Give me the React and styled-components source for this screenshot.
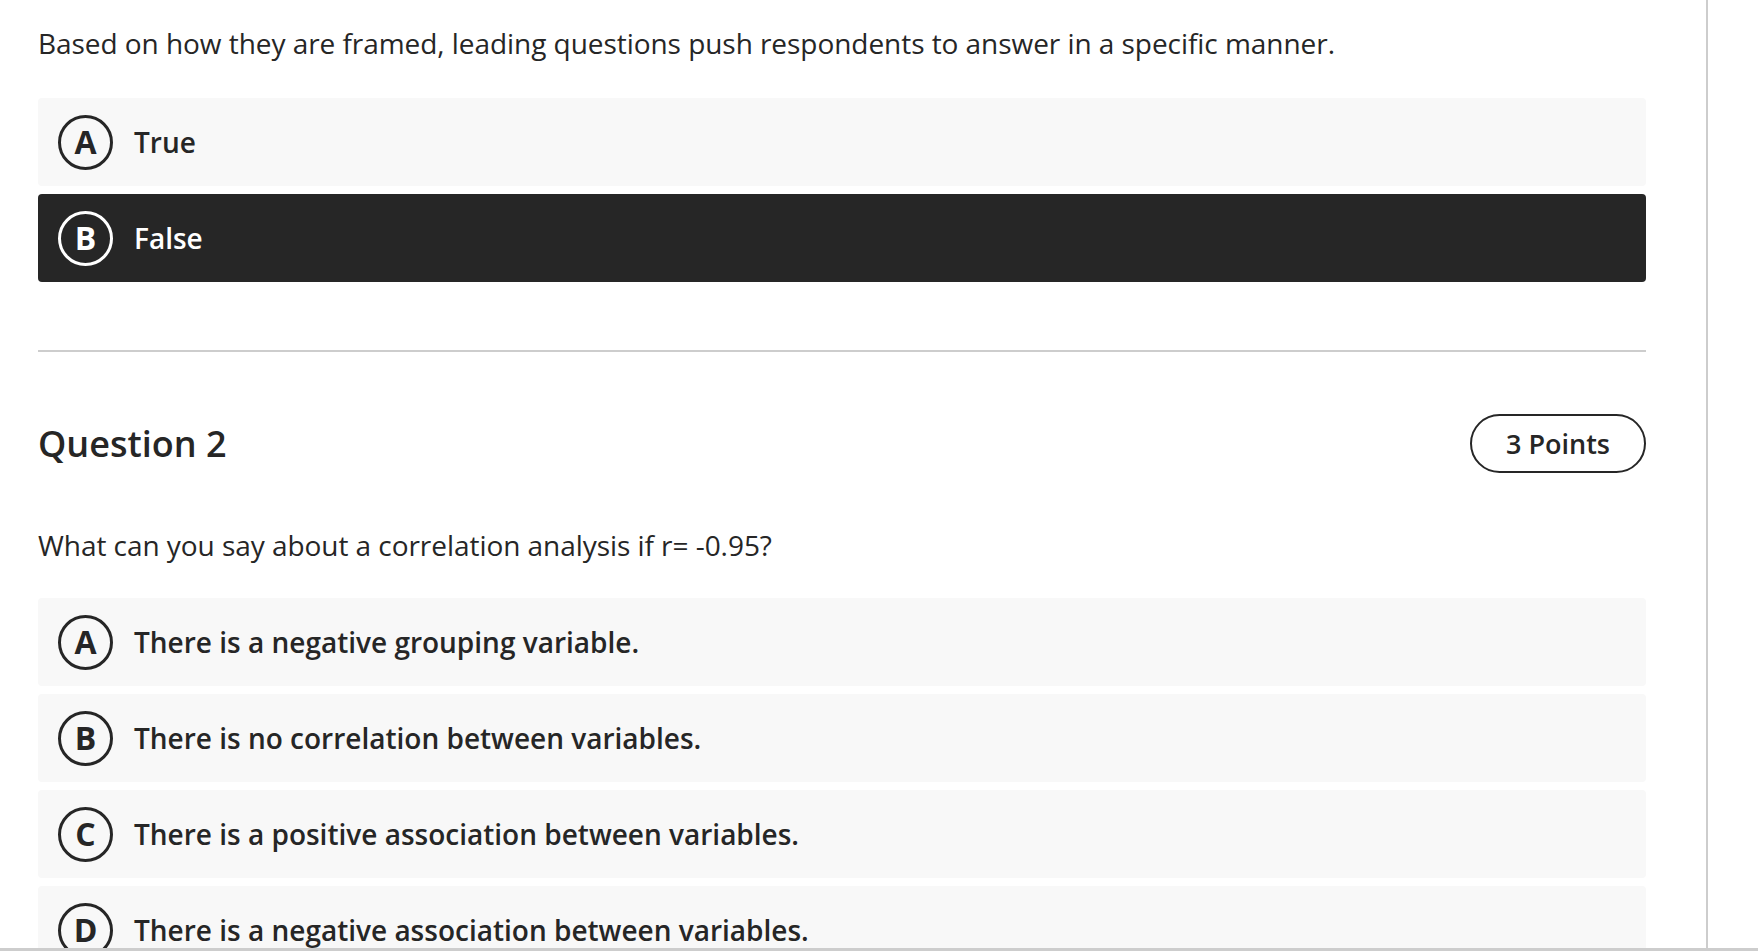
import styled, { createGlobalStyle } from 'styled-components'

const GlobalStyle = createGlobalStyle`
    html, body {
        margin: 0;
        padding: 0;
        background: #ffffff;
    }
    body {
        font-family: "Open Sans", "Noto Sans", "Liberation Sans", sans-serif;
        color: #262626;
    }
    * {
        box-sizing: border-box;
    }
`

const Frame = styled.div`
    display: flex;
    height: 951px;
    border-bottom: 3px solid #cdcdcd;
    overflow: hidden;
`

const Panel = styled.main`
    width: 1708px;
    flex-shrink: 0;
    height: 100%;
    overflow: hidden;
    border-right: 2px solid #cdcdcd;
    padding: 22px 60px 0 38px;
`

const Aside = styled.div`
    flex: 1;
`

const Prompt = styled.p`
    margin: ${p => p.$top || 0}px 0 0;
    font-size: 28px;
    line-height: 42px;
    font-weight: 400;
    letter-spacing: -0.05px;
`

const OptionList = styled.div`
    display: flex;
    flex-direction: column;
    gap: 8px;
    margin-top: ${p => p.$top}px;
`

const Option = styled.div`
    display: flex;
    align-items: center;
    gap: 21px;
    height: 88px;
    flex-shrink: 0;
    padding-left: 20px;
    border-radius: 4px;
    background: ${p => (p.$selected ? '#262626' : '#f8f8f8')};
    color: ${p => (p.$selected ? '#ffffff' : '#262626')};
    cursor: pointer;
`

const Letter = styled.span`
    display: flex;
    align-items: center;
    justify-content: center;
    width: 55px;
    height: 55px;
    flex-shrink: 0;
    border-radius: 50%;
    border: 3px solid currentColor;
    font-size: 32px;
    font-weight: 700;
    line-height: 1;
    padding-bottom: 1px;
`

const OptionText = styled.span`
    font-size: 28px;
    font-weight: 600;
    line-height: 42px;
`

const Divider = styled.hr`
    margin: 68px 0 0;
    border: 0;
    height: 2px;
    background: #cdcdcd;
`

const QuestionHeader = styled.div`
    display: flex;
    align-items: center;
    justify-content: space-between;
    margin-top: 62px;
`

const Title = styled.h2`
    margin: 0;
    font-size: 36px;
    font-weight: 600;
    line-height: 1;
`

const Points = styled.span`
    display: flex;
    align-items: center;
    height: 59px;
    padding: 0 34px;
    border: 2px solid #262626;
    border-radius: 30px;
    font-size: 27px;
    font-weight: 600;
`

const Choices = ({ options, selected, top }) => (
    <OptionList $top={top}>
        {options.map((text, i) => {
            const letter = String.fromCharCode(65 + i)
            return (
                <Option key={letter} $selected={selected === letter}>
                    <Letter>{letter}</Letter>
                    <OptionText>{text}</OptionText>
                </Option>
            )
        })}
    </OptionList>
)

export default function App() {
    return (
        <>
            <GlobalStyle />
            <Frame>
                <Panel>
                    <Prompt>Based on how they are framed, leading questions push respondents to answer in a specific manner.</Prompt>
                    <Choices top={34} selected="B" options={['True', 'False']} />
                    <Divider />
                    <QuestionHeader>
                        <Title>Question 2</Title>
                        <Points>3 Points</Points>
                    </QuestionHeader>
                    <Prompt $top={51}>What can you say about a correlation analysis if r= -0.95?</Prompt>
                    <Choices
                        top={32}
                        options={[
                            'There is a negative grouping variable.',
                            'There is no correlation between variables.',
                            'There is a positive association between variables.',
                            'There is a negative association between variables.',
                        ]}
                    />
                </Panel>
                <Aside />
            </Frame>
        </>
    )
}
